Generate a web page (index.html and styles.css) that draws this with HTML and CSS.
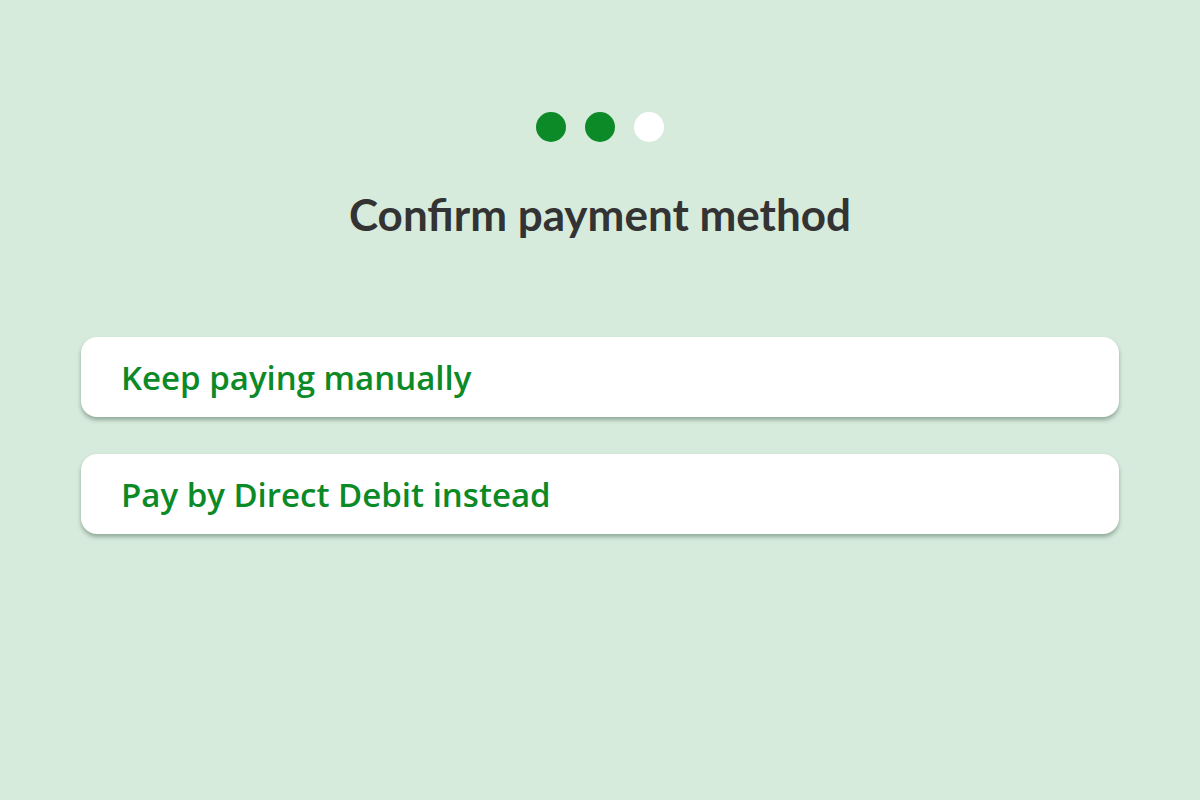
FILE: index.html
```html
<!DOCTYPE html>
<html lang="en">
<head>
<meta charset="utf-8">
<title>Confirm payment method</title>
<link rel="stylesheet" href="styles.css">
</head>
<body>
<main class="screen">
  <div class="steps">
    <span class="dot dot-done"></span>
    <span class="dot dot-done"></span>
    <span class="dot dot-todo"></span>
  </div>
  <h1 class="title">Confirm payment method</h1>
  <div class="options">
    <button class="option">Keep paying manually</button>
    <button class="option">Pay by Direct Debit instead</button>
  </div>
</main>
</body>
</html>
```
FILE: styles.css
```css
html, body {
  margin: 0;
  padding: 0;
}
body {
  width: 1200px;
  height: 800px;
  background: #d7ebdd;
  font-family: Lato, "Open Sans", sans-serif;
  overflow: hidden;
}
.screen {
  display: flex;
  flex-direction: column;
  align-items: center;
  padding: 112px 81px 0;
}
.steps {
  display: flex;
  gap: 19px;
}
.dot {
  width: 30px;
  height: 30px;
  border-radius: 50%;
}
.dot-done { background: #0b8a27; }
.dot-todo { background: #ffffff; }
.title {
  margin: 44px 0 0;
  font-size: 44px;
  line-height: 56px;
  font-weight: 700;
  color: #333333;
  letter-spacing: 0;
}
.options {
  align-self: stretch;
  display: flex;
  flex-direction: column;
  gap: 37px;
  margin-top: 95px;
}
.option {
  display: block;
  height: 80px;
  padding: 0 40px;
  border: 0;
  border-radius: 16px;
  background: #ffffff;
  box-shadow: 0 3px 4px rgba(60, 90, 70, 0.45);
  text-align: left;
  font-family: "Open Sans", Lato, sans-serif;
  font-size: 33px;
  font-weight: 600;
  color: #0b8a27;
}
```
